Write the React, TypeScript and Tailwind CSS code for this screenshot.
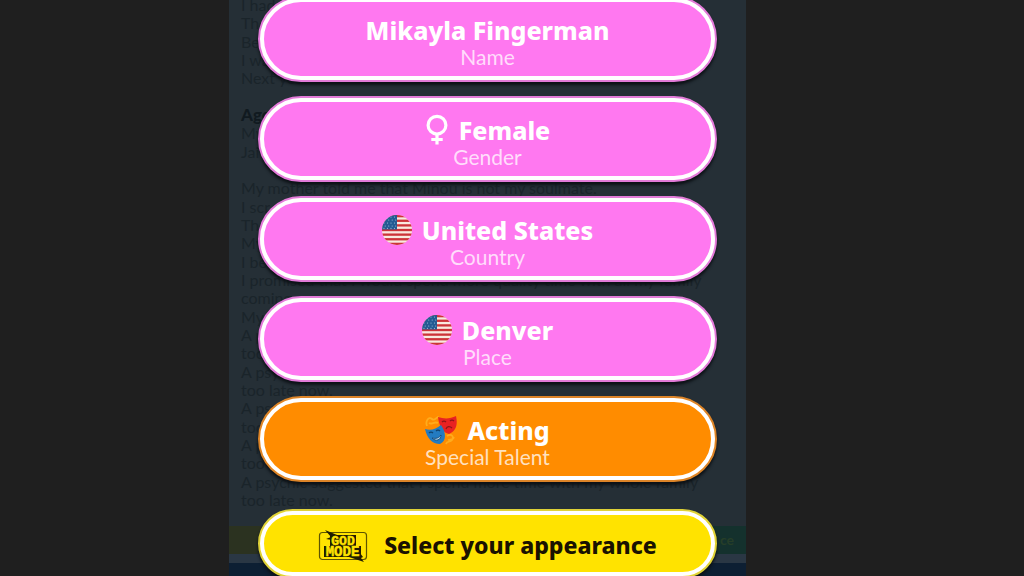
import type { ReactNode } from "react";

const journal: { text: string; bold?: boolean }[] = [
  { text: "I had" },
  { text: "The" },
  { text: "Best" },
  { text: "I was" },
  { text: "Next year" },
  { text: "" },
  { text: "Age:", bold: true },
  { text: "My" },
  { text: "Jai" },
  { text: "" },
  { text: "My mother told me that Minou is not my soulmate." },
  { text: "I scr" },
  { text: "The" },
  { text: "My" },
  { text: "I be" },
  { text: "I promised that I would spend more quality time with all my family" },
  { text: "coming" },
  { text: "My" },
  { text: "A psy" },
  { text: "too late now." },
  { text: "A psychic" },
  { text: "too late now." },
  { text: "A psy" },
  { text: "too" },
  { text: "A psy" },
  { text: "too" },
  { text: "A psychic suggested that I spend more time with my whole family" },
  { text: "too late now." },
];

function VenusIcon() {
  return (
    <svg viewBox="0 0 24 32" className="h-8 w-6" fill="none" stroke="#fff" strokeWidth="3.2" aria-hidden="true">
      <circle cx="12" cy="11.2" r="8.9" />
      <path d="M12 20v10.5M6.3 25.5h11.4" />
    </svg>
  );
}

function FlagIcon({ id }: { id: string }) {
  return (
    <svg viewBox="0 0 30 30" className="size-[30px]" aria-hidden="true">
      <clipPath id={id}>
        <circle cx="15" cy="15" r="15" />
      </clipPath>
      <g clipPath={`url(#${id})`}>
        <rect width="30" height="30" fill="#f8e9df" />
        {[0, 2, 4, 6, 8, 10, 12].map((n) => (
          <rect key={n} y={n * 2.31} width="30" height="2.31" fill="#cc3338" />
        ))}
        <rect width="15" height="14.5" fill="#245a93" />
        {[2, 5, 8, 11, 13.3].map((y, row) =>
          [2, 5.5, 9, 12.5].map((x) => (
            <circle key={`${x}-${y}`} cx={x + (row % 2 ? 1.2 : 0)} cy={y} r="0.6" fill="#9cc1dc" />
          )),
        )}
      </g>
    </svg>
  );
}

function MasksIcon() {
  return (
    <svg viewBox="0 0 32 30" className="h-[30px] w-8" fill="none" aria-hidden="true">
      <path d="M2 11C0 6 4 1 7 4s5-4 7-1M4 8c3 2 5-2 9 0M22 21c5-3 7 1 5 4s-5 0-6 4M23 25c3-1 4 1 6-3" stroke="#ffac1c" strokeWidth="1.8" />
      <path d="M13 2c6 2 12 2 18-1 2 9 0 15-7 18-6-1-10-8-11-17Z" fill="#e82222" />
      <path d="M17 7c1-1 3-1 4 0M25 6c1-1 3-1 4 0M21 14c1-3 4-3 6-1" stroke="#8f1717" strokeWidth="1.3" />
      <path d="M0 14c6 2 11 0 16-4 5 7 6 16-1 19C7 29 2 23 0 14Z" fill="#237bc1" />
      <path d="M4 18c1-1 3-1 4 0M11 16c1-1 3-1 4 0" stroke="#10436f" strokeWidth="1.3" />
      <path d="M7 23c4 1 7 0 9-3 0 5-5 7-9 3Z" fill="#b5d5e9" stroke="#10436f" strokeWidth="0.8" />
    </svg>
  );
}

function GodModeIcon() {
  return (
    <svg viewBox="0 0 50 34" className="h-[34px] w-[50px]" aria-hidden="true">
      <rect x="1.5" y="3.5" width="47" height="27" rx="3" fill="none" stroke="#5e5500" strokeWidth="1.2" />
      <path d="M7 1 24 8H12l2 3-6-1 5-2ZM46 33 31 28h10l1-4 3 4-2 1Z" fill="#211c00" />
      <rect x="12" y="6" width="26" height="11" fill="#211c00" />
      <rect x="6" y="17" width="37" height="11" fill="#211c00" />
      <g
        className="font-['Liberation_Mono',monospace] font-bold"
        textAnchor="middle"
        fill="#ffe300"
        stroke="#ffe300"
        strokeWidth="0.5"
      >
        <text x="25" y="15.5" fontSize="13">GOD</text>
        <text x="24.5" y="26.5" fontSize="14">MODE</text>
      </g>
    </svg>
  );
}

type CardProps = { title: string; label: string; icon?: ReactNode; tone?: "pink" | "orange" };

function TraitCard({ title, label, icon, tone = "pink" }: CardProps) {
  const colors = tone === "pink" ? "bg-[#ff78f0] border-[#e27bd8]" : "bg-[#ff8c00] border-[#dc8428]";
  return (
    <button type="button" className={`w-full rounded-full border-2 shadow-[0_3px_3px_#0c1116] ${colors}`}>
      <span className="flex h-[82px] flex-col items-center rounded-full border-4 border-white pt-3 text-white">
        <span className="flex h-8 items-center justify-center gap-2.5 font-['Noto_Sans',sans-serif] text-[25px] leading-8 font-extrabold">
          {icon}
          {title}
        </span>
        <span className="text-[21px] leading-[22px] text-white/75">{label}</span>
      </span>
    </button>
  );
}

export default function App() {
  return (
    <div className="flex h-screen justify-center overflow-hidden bg-[#1f1f1f] pr-[49px] font-['Lato','Noto_Sans',sans-serif]">
      <main className="relative h-full w-full max-w-[517px] overflow-hidden bg-[#252f36]">
        <div className="absolute inset-0 flex flex-col" aria-hidden="true">
          <div className="-mt-1 flex h-[530px] shrink-0 flex-col justify-between px-3 pb-[17px] text-base leading-[18px] whitespace-nowrap text-[#1a242a]">
            {journal.map((line, i) => (
              <p key={i} className={line.bold ? "h-[18px] text-[17px] leading-[18px] font-black text-[#111a20]" : "h-[18px]"}>
                {line.text}
              </p>
            ))}
          </div>
          <div className="flex h-7 shrink-0 items-center justify-end bg-linear-to-r from-[#2b3220] from-50% to-[#14312d] to-50% pr-3 text-sm font-bold text-[#263e28]">
            ce
          </div>
          <div className="h-[9px] shrink-0 bg-[#2a3744]" />
          <div className="grow bg-[#0d1f33]" />
        </div>
        <section className="relative -mt-1 flex flex-col gap-[14px] px-[29px]">
          <TraitCard title="Mikayla Fingerman" label="Name" />
          <TraitCard title="Female" label="Gender" icon={<VenusIcon />} />
          <TraitCard title="United States" label="Country" icon={<FlagIcon id="flag-country" />} />
          <TraitCard title="Denver" label="Place" icon={<FlagIcon id="flag-place" />} />
          <TraitCard title="Acting" label="Special Talent" icon={<MasksIcon />} tone="orange" />
          <button
            type="button"
            className="mt-[13px] w-full rounded-full border-2 border-[#dfd238] bg-[#ffe300] shadow-[0_3px_3px_#0c1116]"
          >
            <span className="flex h-[65px] items-center justify-center gap-4 rounded-full border-4 border-white pt-1 font-['Noto_Sans',sans-serif] text-[23px] font-extrabold text-[#1a1200]">
              <GodModeIcon />
              Select your appearance
            </span>
          </button>
        </section>
      </main>
    </div>
  );
}
